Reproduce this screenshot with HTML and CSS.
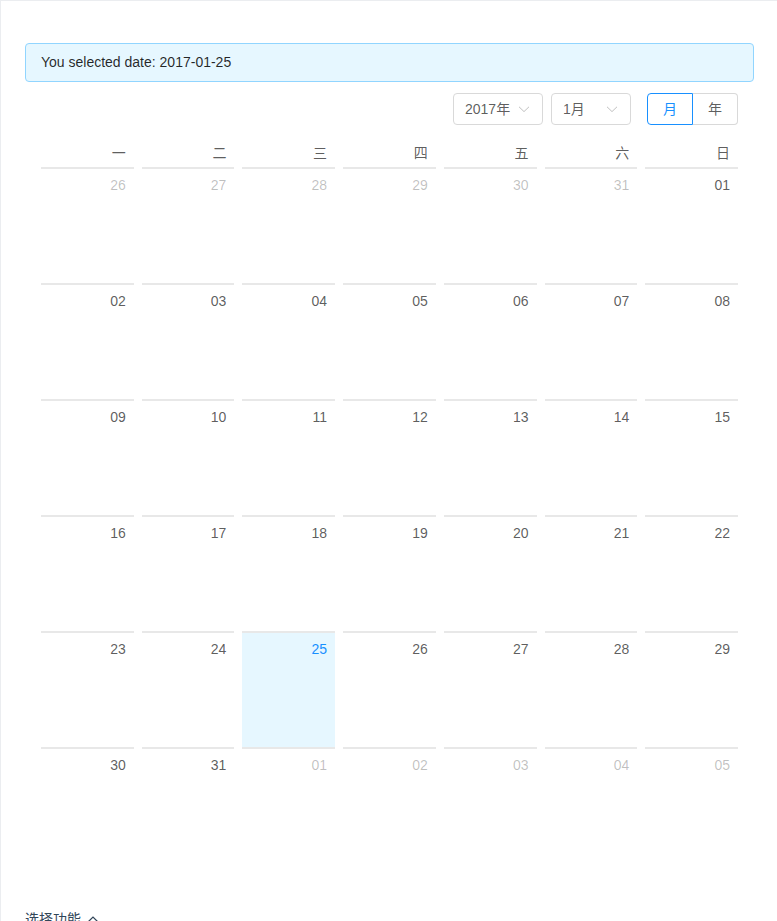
FILE: index.html
```html
<!DOCTYPE html>
<html lang="zh">
<head>
<meta charset="utf-8">
<title>Calendar</title>
<link rel="stylesheet" href="styles.css">
</head>
<body>
<div class="page">
  <div class="alert">You selected date: 2017-01-25</div>
  <div class="calendar">
    <div class="cal-header">
      <div class="select year"><span class="sel-text">2017年</span><svg class="arrow" viewBox="0 0 12 12" width="12" height="12"><path d="M1 3.8 L6 8.6 L11 3.8" fill="none" stroke="currentColor" stroke-width="1"/></svg></div>
      <div class="select month"><span class="sel-text">1月</span><svg class="arrow" viewBox="0 0 12 12" width="12" height="12"><path d="M1 3.8 L6 8.6 L11 3.8" fill="none" stroke="currentColor" stroke-width="1"/></svg></div>
      <div class="radio-group">
        <span class="radio checked">月</span><span class="radio">年</span>
      </div>
    </div>
    <div class="cal-body">
      <table class="cal-table">
        <thead>
          <tr><th>一</th><th>二</th><th>三</th><th>四</th><th>五</th><th>六</th><th>日</th></tr>
        </thead>
        <tbody>
          <tr>
            <td class="other"><div class="date"><div class="value">26</div></div></td>
            <td class="other"><div class="date"><div class="value">27</div></div></td>
            <td class="other"><div class="date"><div class="value">28</div></div></td>
            <td class="other"><div class="date"><div class="value">29</div></div></td>
            <td class="other"><div class="date"><div class="value">30</div></div></td>
            <td class="other"><div class="date"><div class="value">31</div></div></td>
            <td><div class="date"><div class="value">01</div></div></td>
          </tr>
          <tr>
            <td><div class="date"><div class="value">02</div></div></td>
            <td><div class="date"><div class="value">03</div></div></td>
            <td><div class="date"><div class="value">04</div></div></td>
            <td><div class="date"><div class="value">05</div></div></td>
            <td><div class="date"><div class="value">06</div></div></td>
            <td><div class="date"><div class="value">07</div></div></td>
            <td><div class="date"><div class="value">08</div></div></td>
          </tr>
          <tr>
            <td><div class="date"><div class="value">09</div></div></td>
            <td><div class="date"><div class="value">10</div></div></td>
            <td><div class="date"><div class="value">11</div></div></td>
            <td><div class="date"><div class="value">12</div></div></td>
            <td><div class="date"><div class="value">13</div></div></td>
            <td><div class="date"><div class="value">14</div></div></td>
            <td><div class="date"><div class="value">15</div></div></td>
          </tr>
          <tr>
            <td><div class="date"><div class="value">16</div></div></td>
            <td><div class="date"><div class="value">17</div></div></td>
            <td><div class="date"><div class="value">18</div></div></td>
            <td><div class="date"><div class="value">19</div></div></td>
            <td><div class="date"><div class="value">20</div></div></td>
            <td><div class="date"><div class="value">21</div></div></td>
            <td><div class="date"><div class="value">22</div></div></td>
          </tr>
          <tr>
            <td><div class="date"><div class="value">23</div></div></td>
            <td><div class="date"><div class="value">24</div></div></td>
            <td class="selected"><div class="date"><div class="value">25</div></div></td>
            <td><div class="date"><div class="value">26</div></div></td>
            <td><div class="date"><div class="value">27</div></div></td>
            <td><div class="date"><div class="value">28</div></div></td>
            <td><div class="date"><div class="value">29</div></div></td>
          </tr>
          <tr>
            <td><div class="date"><div class="value">30</div></div></td>
            <td><div class="date"><div class="value">31</div></div></td>
            <td class="other"><div class="date"><div class="value">01</div></div></td>
            <td class="other"><div class="date"><div class="value">02</div></div></td>
            <td class="other"><div class="date"><div class="value">03</div></div></td>
            <td class="other"><div class="date"><div class="value">04</div></div></td>
            <td class="other"><div class="date"><div class="value">05</div></div></td>
          </tr>
        </tbody>
      </table>
    </div>
  </div>
  <div class="footer-title">选择功能 <svg class="caret" viewBox="0 0 12 12" width="12" height="12"><path d="M1 8 L6 3 L11 8" fill="none" stroke="currentColor" stroke-width="1.2"/></svg></div>
</div>
</body>
</html>
```

FILE: styles.css
```css
html, body {
  margin: 0;
  padding: 0;
  background: #fff;
  overflow: hidden;
}
body {
  font-family: "Liberation Sans", "Noto Sans CJK SC", sans-serif;
  font-size: 14px;
  line-height: 1.5;
  color: rgba(0, 0, 0, 0.65);
}
.page {
  box-sizing: border-box;
  width: 779px;
  min-height: 960px;
  border: 1px solid #ebedf0;
  padding: 42px 24px 24px;
}
.alert {
  border: 1px solid #91d5ff;
  background: #e6f7ff;
  border-radius: 4px;
  padding: 8px 15px;
  color: rgba(0, 0, 0, 0.85);
  line-height: 21px;
}
.cal-header {
  display: flex;
  justify-content: flex-end;
  align-items: center;
  padding: 11px 16px 11px 0;
}
.select {
  box-sizing: border-box;
  height: 32px;
  border: 1px solid #d9d9d9;
  border-radius: 4px;
  display: flex;
  align-items: center;
  justify-content: space-between;
  padding: 0 12px 0 11px;
  color: rgba(0, 0, 0, 0.65);
}
.select.year { width: 90px; }
.select.month { width: 80px; margin-left: 8px; }
.sel-text { line-height: 30px; }
.arrow {
  color: rgba(0, 0, 0, 0.25);
  display: block;
}
.radio-group {
  display: flex;
  margin-left: 16px;
}
.radio {
  box-sizing: border-box;
  height: 32px;
  line-height: 30px;
  padding: 0 15px;
  border: 1px solid #d9d9d9;
  color: rgba(0, 0, 0, 0.65);
  background: #fff;
}
.radio + .radio { border-left: 0; }
.radio:first-child { border-radius: 4px 0 0 4px; }
.radio:last-child { border-radius: 0 4px 4px 0; }
.radio.checked {
  border-color: #1890ff;
  color: #1890ff;
}
.cal-body {
  padding: 8px 12px;
}
.cal-table {
  width: 100%;
  table-layout: fixed;
  border-collapse: collapse;
  border-spacing: 0;
}
.cal-table th {
  font-weight: normal;
  text-align: right;
  padding: 0 12px 5px 0;
  line-height: 18px;
  color: rgba(0, 0, 0, 0.65);
}
.cal-table td {
  padding: 0;
}
.date {
  box-sizing: border-box;
  height: 116px;
  margin: 0 4px;
  padding: 4px 8px 0;
  border-top: 2px solid #e8e8e8;
}
.value {
  text-align: right;
  line-height: 24px;
  color: rgba(0, 0, 0, 0.65);
}
.other .value { color: rgba(0, 0, 0, 0.25); }
.selected .date { background: #e6f7ff; }
.selected .value { color: #1890ff; }
.footer-title {
  margin-top: 38px;
  color: #314659;
  line-height: 21px;
  display: flex;
  align-items: center;
  gap: 6px;
}
.caret { color: #314659; }
```
